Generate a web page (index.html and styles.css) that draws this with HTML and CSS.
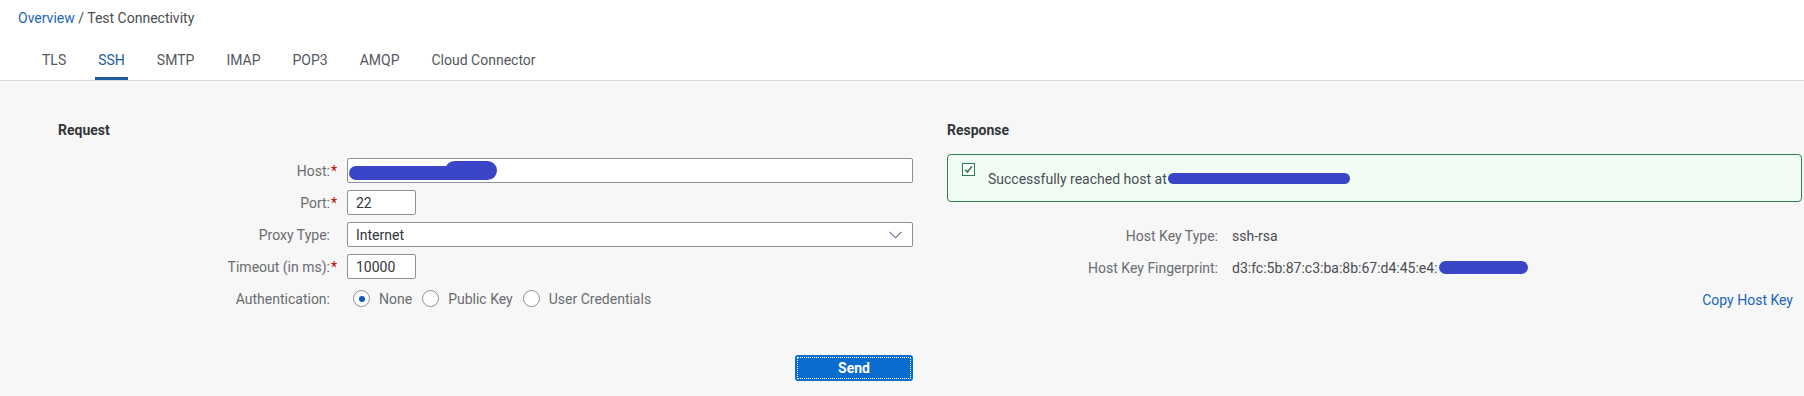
FILE: index.html
```html
<!DOCTYPE html>
<html lang="en">
<head>
    <meta charset="UTF-8">
    <meta name="viewport" content="width=device-width, initial-scale=1.0">
    <title>Test Connectivity</title>
    <link rel="stylesheet" href="styles.css">
</head>
<body>

<header class="page-header">
    <!-- Breadcrumb -->
    <nav class="breadcrumb">
        <a href="#" class="link">Overview</a> / Test Connectivity
    </nav>

    <!-- Protocol tabs -->
    <div class="tab-bar">
        <a href="#" class="tab">TLS</a>
        <a href="#" class="tab tab-active">SSH</a>
        <a href="#" class="tab">SMTP</a>
        <a href="#" class="tab">IMAP</a>
        <a href="#" class="tab">POP3</a>
        <a href="#" class="tab">AMQP</a>
        <a href="#" class="tab">Cloud Connector</a>
    </div>
</header>

<main class="content">
    <!-- Request side -->
    <section class="panel">
        <h2 class="panel-title">Request</h2>
        <form class="form" onsubmit="return false">
            <div class="form-row">
                <label class="form-label" for="host">Host:<span class="req">*</span></label>
                <div class="input input-wide">
                    <span class="redact redact-host"></span>
                    <span class="redact redact-host-tail"></span>
                </div>
            </div>
            <div class="form-row">
                <label class="form-label" for="port">Port:<span class="req">*</span></label>
                <div class="input input-short">22</div>
            </div>
            <div class="form-row">
                <label class="form-label" for="proxy">Proxy Type:<span class="req"></span></label>
                <div class="input input-wide select">
                    <span>Internet</span>
                    <svg class="chevron" width="13" height="8" viewBox="0 0 13 8">
                        <polyline points="0.5,0.8 6.5,6.8 12.5,0.8" fill="none" stroke="#5b6f86" stroke-width="1.1"/>
                    </svg>
                </div>
            </div>
            <div class="form-row">
                <label class="form-label" for="timeout">Timeout (in ms):<span class="req">*</span></label>
                <div class="input input-short">10000</div>
            </div>
            <div class="form-row">
                <label class="form-label">Authentication:<span class="req"></span></label>
                <div class="radio-group">
                    <span class="radio radio-on"></span><span class="radio-text">None</span>
                    <span class="radio"></span><span class="radio-text">Public Key</span>
                    <span class="radio"></span><span class="radio-text">User Credentials</span>
                </div>
            </div>
        </form>

        <div class="actions">
            <button type="button" class="send-button">Send</button>
        </div>
    </section>

    <!-- Response side -->
    <section class="panel">
        <h2 class="panel-title">Response</h2>
        <div class="message-strip">
            <svg class="strip-icon" width="13" height="13" viewBox="0 0 13 13">
                <rect x="0.5" y="0.5" width="12" height="12" fill="#ffffff" stroke="#2a7f4c" stroke-width="1"/>
                <polyline points="3.2,6.8 5.4,9 9.8,3.6" fill="none" stroke="#2a7f4c" stroke-width="1.6"/>
            </svg>
            <span class="strip-text">Successfully reached host at</span>
            <span class="redact redact-strip"></span>
        </div>

        <div class="key-row">
            <span class="key-label">Host Key Type:</span>
            <span class="key-value">ssh-rsa</span>
        </div>
        <div class="key-row">
            <span class="key-label">Host Key Fingerprint:</span>
            <span class="key-value">d3:fc:5b:87:c3:ba:8b:67:d4:45:e4:<span class="redact redact-key"></span></span>
        </div>
        <div class="copy-row">
            <a href="#" class="link">Copy Host Key</a>
        </div>
    </section>
</main>

</body>
</html>
```

FILE: styles.css
```css
body {
    margin: 0;
    font-family: Roboto, "Liberation Sans", Arial, sans-serif;
    font-size: 14px;
    color: #32363a;
    background-color: #f7f7f7;
}
.link {
    color: #1b66b8;
    text-decoration: none;
}

/* header: breadcrumb + tabs */
.page-header {
    background-color: #fff;
}
.breadcrumb {
    height: 38px;
    box-sizing: border-box;
    padding: 9px 18px 0;
    line-height: 18px;
    color: #4a4e52;
}
.tab-bar {
    display: flex;
    gap: 26px;
    padding-left: 39px;
    border-bottom: 1px solid #d9d9d9;
}
.tab {
    height: 42px;
    box-sizing: border-box;
    padding: 13px 3px 8px;
    line-height: 18px;
    color: #54585c;
    text-decoration: none;
    border-bottom: 3px solid transparent;
}
.tab-active {
    color: #1d5a9c;
    border-bottom-color: #1d5a9c;
}

/* two columns */
.content {
    display: grid;
    grid-template-columns: 1fr 1fr;
    gap: 34px;
    padding: 40px 2px 0 58px;
}
.panel-title {
    margin: 0 0 15px;
    font-size: 14px;
    line-height: 18px;
    font-weight: bold;
    color: #32363a;
}

/* request form */
.form {
    display: flex;
    flex-direction: column;
    gap: 7px;
    padding-top: 4px;
}
.form-row {
    display: grid;
    grid-template-columns: 279px 1fr;
    gap: 10px;
    align-items: center;
    height: 25px;
}
.form-label {
    display: flex;
    justify-content: flex-end;
    color: #6a6d70;
}
.req {
    width: 7px;
    color: #bb0000;
    text-align: right;
}
.input {
    display: flex;
    align-items: center;
    height: 25px;
    box-sizing: border-box;
    padding: 0 8px;
    background-color: #fff;
    border: 1px solid #89919a;
    border-radius: 2px;
    color: #32363a;
}
.input-short {
    width: 69px;
}
.select {
    justify-content: space-between;
    padding-right: 10px;
}
.radio-group {
    display: flex;
    align-items: center;
    padding-left: 6px;
}
.radio {
    width: 17px;
    height: 17px;
    box-sizing: border-box;
    border: 1px solid #89919a;
    border-radius: 50%;
    background-color: #fff;
    position: relative;
}
.radio-on::after {
    content: "";
    position: absolute;
    left: 4.5px;
    top: 4.5px;
    width: 6px;
    height: 6px;
    border-radius: 50%;
    background-color: #0a5cb8;
}
.radio-text {
    margin: 0 10px 0 9px;
    color: #6a6d70;
}
.actions {
    display: flex;
    justify-content: flex-end;
    margin-top: 44px;
}
.send-button {
    width: 118px;
    height: 26px;
    border: none;
    border-radius: 3px;
    background-color: #0b6cd0;
    color: #fff;
    font-family: inherit;
    font-size: 14px;
    font-weight: bold;
    outline: 1px dotted #fff;
    outline-offset: -3px;
    cursor: pointer;
}

/* response */
.message-strip {
    display: flex;
    align-items: center;
    height: 48px;
    box-sizing: border-box;
    padding: 0 14px;
    background-color: #f1fcf5;
    border: 1px solid #2e7f52;
    border-radius: 4px;
    margin-bottom: 21px;
}
.strip-icon {
    align-self: flex-start;
    margin-top: 8px;
    margin-right: 13px;
}
.strip-text {
    color: #4a4e52;
    margin-top: 1px;
}
.key-row {
    display: grid;
    grid-template-columns: 271px 1fr;
    gap: 14px;
    align-items: center;
    height: 25px;
    margin-bottom: 7px;
}
.key-label {
    text-align: right;
    color: #6a6d70;
}
.key-value {
    display: flex;
    align-items: center;
    color: #4a4e52;
}
.copy-row {
    display: flex;
    justify-content: flex-end;
    align-items: center;
    height: 25px;
    padding-right: 9px;
}

/* blue scribbles that hide host names in the screenshot */
.redact {
    display: inline-block;
    background-color: #3b45c8;
    border-radius: 8px;
}
.redact-host {
    width: 136px;
    height: 14px;
    margin-left: -7px;
    margin-top: 4px;
}
.redact-host-tail {
    width: 52px;
    height: 19px;
    margin-left: -40px;
    border-radius: 10px;
}
.redact-strip {
    width: 182px;
    height: 11px;
    margin-left: 1px;
}
.redact-key {
    width: 89px;
    height: 13px;
    margin-left: 1px;
}
```
